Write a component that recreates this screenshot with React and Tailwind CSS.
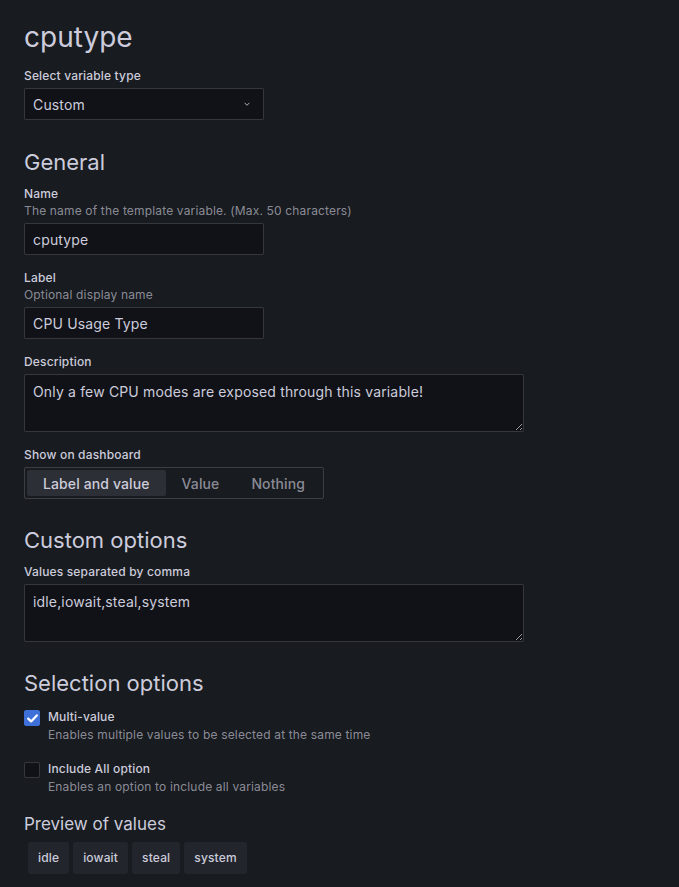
import { useState } from 'react';

const labelCls = 'block text-[12px] leading-[18px] font-medium text-[#ccccdc]';
const descCls = 'block text-[12px] leading-4 text-[rgba(204,204,220,0.65)]';
const inputCls =
  'w-[240px] h-8 px-2 bg-[#111217] border border-[rgba(204,204,220,0.2)] rounded-[2px] text-[14px] text-[#ccccdc] outline-none';
const textareaCls =
  'block w-[500px] h-[58px] px-2 py-[7px] bg-[#111217] border border-[rgba(204,204,220,0.2)] rounded-[2px] text-[14px] leading-5 text-[#ccccdc] outline-none';
const headingCls = 'text-[22px] leading-[26px] font-normal tracking-normal';

function Field({ label, description, children, className = '' }) {
  return (
    <div className={className}>
      <label className={labelCls}>{label}</label>
      {description && <span className={descCls}>{description}</span>}
      <div className={description ? 'mt-1' : 'mt-[3px]'}>{children}</div>
    </div>
  );
}

function Checkbox({ checked, onChange, label, description, className = '' }) {
  return (
    <div className={'flex items-start gap-2 ' + className}>
      <button
        onClick={onChange}
        className={
          'mt-[1px] w-4 h-4 shrink-0 rounded-[2px] flex items-center justify-center ' +
          (checked
            ? 'bg-[#3d71d9] border border-[#3d71d9]'
            : 'bg-[#111217] border border-[rgba(204,204,220,0.2)]')
        }
      >
        {checked && (
          <svg width="11" height="9" viewBox="0 0 11 9" fill="none">
            <path d="M1.2 4.6 L4.1 7.4 L9.8 1.4" stroke="white" strokeWidth="2.2" strokeLinecap="round" strokeLinejoin="round" />
          </svg>
        )}
      </button>
      <div>
        <div className="text-[12px] leading-4 font-medium text-[#ccccdc]">{label}</div>
        <div className="mt-[2px] text-[12px] leading-4 text-[rgba(204,204,220,0.65)]">{description}</div>
      </div>
    </div>
  );
}

export default function App() {
  const [show, setShow] = useState('Label and value');
  const [multi, setMulti] = useState(true);
  const [includeAll, setIncludeAll] = useState(false);
  const [values, setValues] = useState('idle,iowait,steal,system');

  const preview = values.split(',').map((v) => v.trim()).filter(Boolean);

  return (
    <div
      className="min-h-screen bg-[#181b1f] text-[#ccccdc] tracking-[0.01em] px-6 pt-5 pb-6"
      style={{ fontFamily: 'Inter, "Noto Sans", sans-serif' }}
    >
      <h1 className="text-[28px] leading-[34px] font-normal tracking-normal">cputype</h1>

      <Field label="Select variable type" className="mt-[13px]">
        <div className={inputCls + ' flex items-center justify-between'}>
          <span>Custom</span>
          <svg width="10" height="10" viewBox="0 0 24 24" fill="none" className="mr-[3px]">
            <path d="M7 10l5 5 5-5" stroke="#ccccdc" strokeWidth="2" strokeLinecap="round" strokeLinejoin="round" />
          </svg>
        </div>
      </Field>

      <h3 className={'mt-[29px] ' + headingCls}>General</h3>

      <Field
        label="Name"
        description="The name of the template variable. (Max. 50 characters)"
        className="mt-[10px]"
      >
        <input className={inputCls} defaultValue="cputype" />
      </Field>

      <Field label="Label" description="Optional display name" className="mt-[14px]">
        <input className={inputCls} defaultValue="CPU Usage Type" />
      </Field>

      <Field label="Description" className="mt-[14px]">
        <textarea className={textareaCls} defaultValue="Only a few CPU modes are exposed through this variable!" />
      </Field>

      <Field label="Show on dashboard" className="mt-[14px]">
        <div className="inline-flex p-[2px] border border-[rgba(204,204,220,0.2)] rounded-[2px] h-8">
          {['Label and value', 'Value', 'Nothing'].map((opt) => (
            <button
              key={opt}
              onClick={() => setShow(opt)}
              className={
                'px-4 h-[26px] text-[14px] font-medium tracking-[0.008em] rounded-[2px] ' +
                (show === opt
                  ? 'bg-[#2c2f35] text-[#ccccdc]'
                  : 'text-[rgba(204,204,220,0.65)]')
              }
            >
              {opt}
            </button>
          ))}
        </div>
      </Field>

      <h3 className={'mt-7 ' + headingCls}>Custom options</h3>

      <Field label="Values separated by comma" className="mt-[10px]">
        <textarea
          className={textareaCls}
          value={values}
          onChange={(e) => setValues(e.target.value)}
        />
      </Field>

      <h3 className={'mt-7 ' + headingCls}>Selection options</h3>

      <Checkbox
        className="mt-[13px]"
        checked={multi}
        onChange={() => setMulti(!multi)}
        label="Multi-value"
        description="Enables multiple values to be selected at the same time"
      />
      <Checkbox
        className="mt-[18px]"
        checked={includeAll}
        onChange={() => setIncludeAll(!includeAll)}
        label="Include All option"
        description="Enables an option to include all variables"
      />

      <h4 className="mt-[18px] text-[17px] leading-[22px] font-normal tracking-normal">Preview of values</h4>
      <div className="mt-[7px] pl-1 flex flex-wrap gap-1">
        {preview.map((v) => (
          <span
            key={v}
            className="h-8 px-[10px] flex items-center bg-[#22252b] rounded-[2px] text-[12px] font-medium text-[#ccccdc]"
          >
            {v}
          </span>
        ))}
      </div>
    </div>
  );
}
